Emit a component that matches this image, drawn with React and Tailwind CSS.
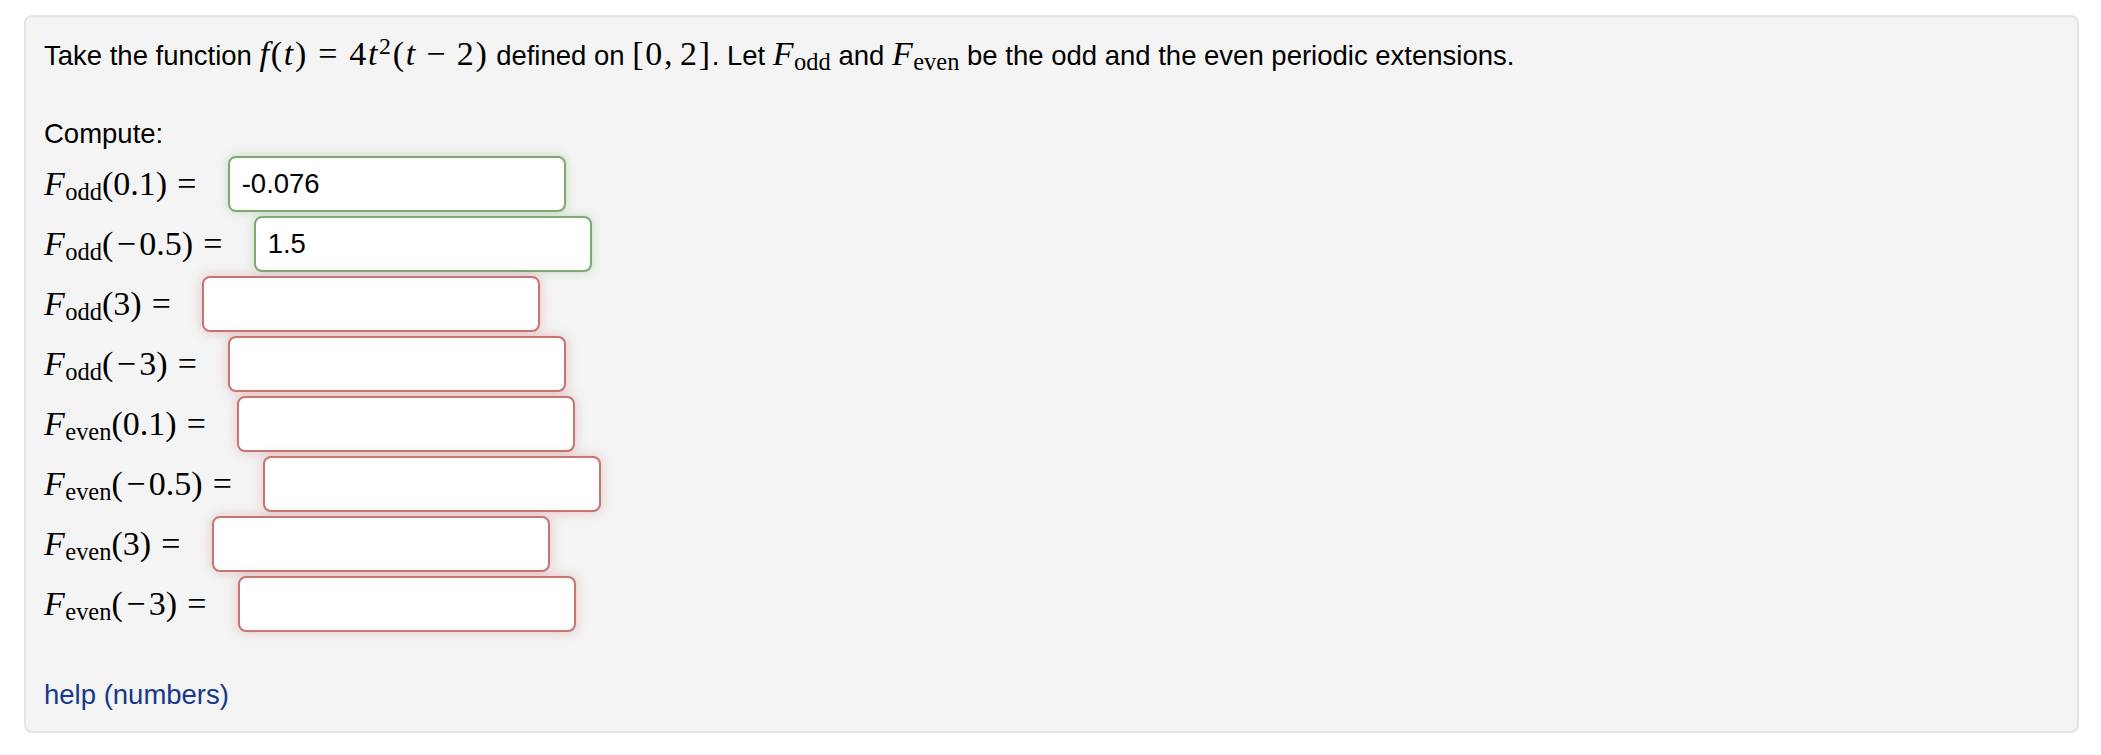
const M = "font-['Liberation_Serif',serif] text-[34px] leading-none";

function V({ children }) {
    return <span className="italic">{children}</span>;
}

function Sub({ children }) {
    return <span className="text-[0.72em] relative top-[0.22em] ml-[0.02em] tracking-normal">{children}</span>;
}

function Op({ children, w = "mx-[0.3em]" }) {
    return <span className={w}>{children}</span>;
}

function F({ sub }) {
    return (
        <span>
            <V>F</V>
            <Sub>{sub}</Sub>
        </span>
    );
}

function Arg({ text }) {
    if (text.startsWith("-")) {
        return (
            <>
                <span className="px-[0.1em]">{"\u2212"}</span>
                {text.slice(1)}
            </>
        );
    }
    return text;
}

const rows = [
    { sub: "odd", arg: "0.1", value: "-0.076", ok: true },
    { sub: "odd", arg: "-0.5", value: "1.5", ok: true },
    { sub: "odd", arg: "3", value: "", ok: false },
    { sub: "odd", arg: "-3", value: "", ok: false },
    { sub: "even", arg: "0.1", value: "", ok: false },
    { sub: "even", arg: "-0.5", value: "", ok: false },
    { sub: "even", arg: "3", value: "", ok: false },
    { sub: "even", arg: "-3", value: "", ok: false },
];

export default function App() {
    return (
        <div className="min-h-screen bg-white pt-[15px] pl-[24px] pr-[22px] font-['Liberation_Sans',Arial,sans-serif] text-[27.5px] text-black">
            <div className="h-[718px] bg-[#f4f4f4] border-2 border-[#e4e4e4] rounded-[8px] pl-[18px] pt-[19px]">
                {/* problem statement */}
                <p className="leading-[40px]">
                    Take the function{" "}
                    <span className={M + " tracking-[0.05em]"}>
                        <V>f</V>(<V>t</V>)<Op>=</Op>4<V>t</V>
                        <span className="text-[0.7em] relative top-[-0.45em]">2</span>(<V>t</V>
                        <Op w="mx-[0.24em] px-[0.04em]">{"\u2212"}</Op>2)
                    </span>{" "}
                    defined on <span className={M + " tracking-[0.05em]"}>[0,<span className="ml-[0.17em]">2</span>]</span>. Let{" "}
                    <span className={M}><F sub="odd" /></span>{" "}
                    and{" "}
                    <span className={M}><F sub="even" /></span>{" "}
                    be the odd and the even periodic extensions.
                </p>

                <p className="leading-[40px] mt-[38px]">Compute:</p>

                {/* answer rows */}
                <div className="flex flex-col">
                    {rows.map((r, i) => (
                        <div key={i} className="flex items-center h-[60px]">
                            <span className={M}>
                                <F sub={r.sub} />(<Arg text={r.arg} />)<Op>=</Op>
                            </span>
                            <input
                                readOnly
                                value={r.value}
                                className={
                                    "ml-[21px] w-[338px] h-[56px] rounded-[8px] border-2 bg-white px-[12px] text-[27.5px] outline-none " +
                                    (r.ok
                                        ? "border-[#7eaa72] shadow-[0_0_10px_rgba(110,170,100,0.35)]"
                                        : "border-[#c57672] shadow-[0_0_12px_rgba(200,100,100,0.35)]")
                                }
                            />
                        </div>
                    ))}
                </div>

                <p className="leading-[40px] mt-[41px]">
                    <a href="#" className="text-[#18388c]">help (numbers)</a>
                </p>
            </div>
        </div>
    );
}
